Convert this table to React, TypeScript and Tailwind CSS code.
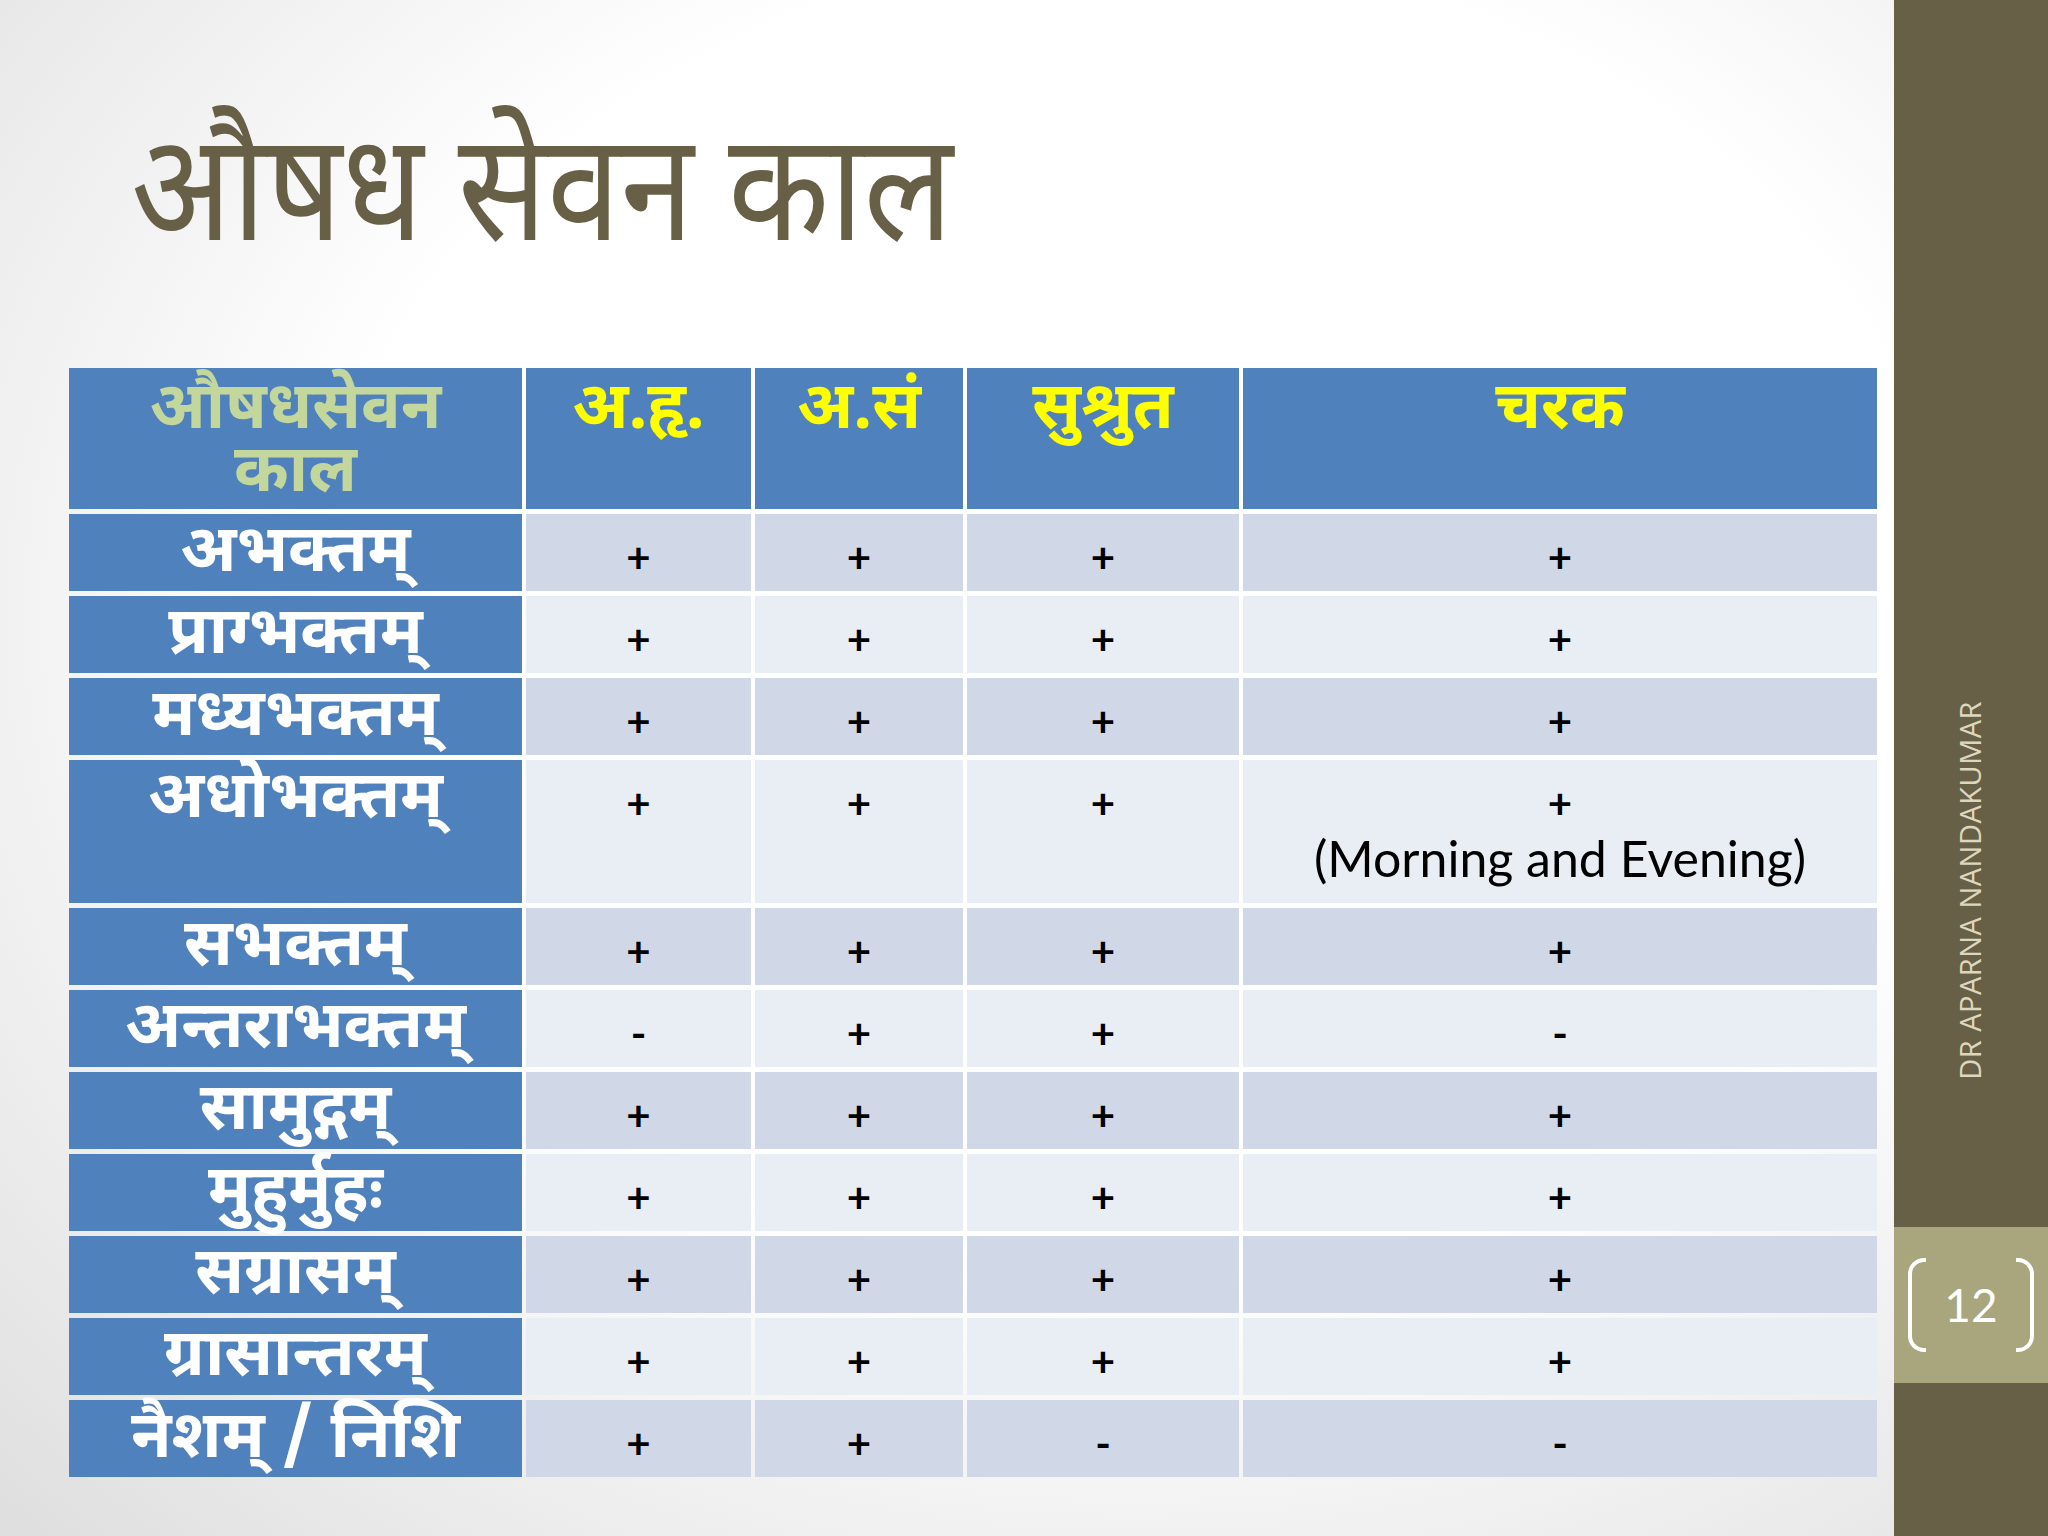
import React from 'react';

const deva = "font-['Noto_Sans_Devanagari','Noto_Sans','Lohit_Devanagari','FreeSans',sans-serif]";

type Row = { label: string; cells: string[]; note?: string };

const rows: Row[] = [
  { label: 'अभक्तम्', cells: ['+', '+', '+', '+'] },
  { label: 'प्राग्भक्तम्', cells: ['+', '+', '+', '+'] },
  { label: 'मध्यभक्तम्', cells: ['+', '+', '+', '+'] },
  { label: 'अधोभक्तम्', cells: ['+', '+', '+', '+'], note: '(Morning and Evening)' },
  { label: 'सभक्तम्', cells: ['+', '+', '+', '+'] },
  { label: 'अन्तराभक्तम्', cells: ['-', '+', '+', '-'] },
  { label: 'सामुद्गम्', cells: ['+', '+', '+', '+'] },
  { label: 'मुहुर्मुहः', cells: ['+', '+', '+', '+'] },
  { label: 'सग्रासम्', cells: ['+', '+', '+', '+'] },
  { label: 'ग्रासान्तरम्', cells: ['+', '+', '+', '+'] },
  { label: 'नैशम् / निशि', cells: ['+', '+', '-', '-'] },
];

const heads = ['अ.हृ.', 'अ.सं', 'सुश्रुत', 'चरक'];

export default function App() {
  return (
    <div className="w-[2048px] h-[1536px] flex overflow-hidden">
      {/* slide body */}
      <div className="flex-1 flex flex-col pl-[69px] pr-[17px] bg-[radial-gradient(ellipse_at_60%_40%,#ffffff_50%,#dedede_100%)]">
        <div className="ml-[62px] mt-[107px] h-[261px]">
          <h1 className={`${deva} inline-block origin-top [transform:scaleY(1.14)] text-[132px] leading-[170px] font-normal text-[#675f46]`}>
            औषध सेवन काल
          </h1>
        </div>

        <div className="grid grid-cols-[453px_225px_208px_272px_634px] grid-rows-[141px_repeat(3,77px)_143px_repeat(7,77px)] gap-x-[4px] gap-y-[5px]">
          <div className={`${deva} bg-[#4f81bd] text-center font-bold text-[66px] leading-[63px] pt-[13px] text-[#c3d69b]`}>
            औषधसेवन
            <br />
            काल
          </div>
          {heads.map((h) => (
            <div key={h} className={`${deva} bg-[#4f81bd] text-center font-bold text-[66px] leading-[63px] pt-[13px] text-[#ffff00]`}>
              {h}
            </div>
          ))}

          {rows.map((r, i) => {
            const bg = i % 2 === 0 ? 'bg-[#d0d8e8]' : 'bg-[#e9edf4]';
            return (
              <React.Fragment key={r.label}>
                <div className={`${deva} bg-[#4f81bd] text-center font-bold text-white text-[66px] leading-[66px] pt-[8px]`}>
                  {r.label}
                </div>
                {r.cells.map((c, j) => (
                  <div
                    key={j}
                    className={`${bg} text-center font-['Lato','Open_Sans',sans-serif] text-black text-[42px] leading-[57px] pt-[15px]`}
                  >
                    <span className="font-bold">{c}</span>
                    {j === 3 && r.note && <div className="text-[50px] leading-[52px]">{r.note}</div>}
                  </div>
                ))}
              </React.Fragment>
            );
          })}
        </div>
      </div>

      {/* side band */}
      <div className="w-[154px] h-full bg-[#675f46] flex flex-col">
        <div className="h-[1227px] flex items-end justify-center pb-[147px] pr-[4px]">
          <div className="[writing-mode:vertical-rl] rotate-180 font-['Open_Sans',sans-serif] text-[29px] leading-none tracking-[0.5px] text-[#ddd7bd]">
            DR APARNA NANDAKUMAR
          </div>
        </div>
        <div className="h-[156px] bg-[#a9a67e] flex items-center justify-between px-[14px]">
          <div className="w-[18px] h-[94px] border-[4px] border-r-0 border-white rounded-l-[16px]" />
          <span className="font-['Lato','Open_Sans',sans-serif] text-[46px] leading-none text-white">12</span>
          <div className="w-[18px] h-[94px] border-[4px] border-l-0 border-white rounded-r-[16px]" />
        </div>
      </div>
    </div>
  );
}
